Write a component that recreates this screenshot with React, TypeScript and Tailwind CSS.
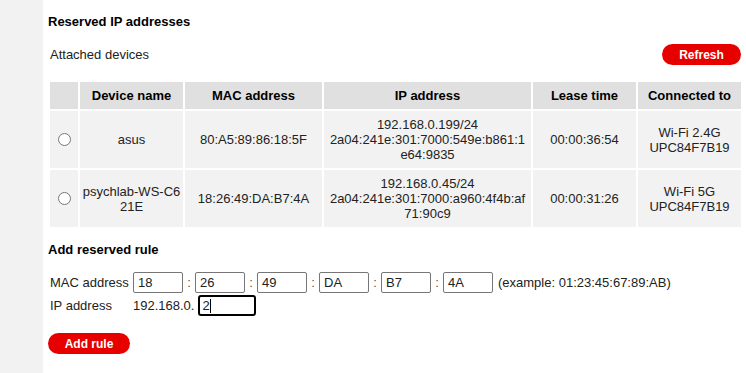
const font = { fontFamily: '"Liberation Sans", Arial, sans-serif' };

const devices = [
  {
    name: ['asus'],
    mac: '80:A5:89:86:18:5F',
    ip: ['192.168.0.199/24', '2a04:241e:301:7000:549e:b861:1', 'e64:9835'],
    lease: '00:00:36:54',
    conn: ['Wi-Fi 2.4G', 'UPC84F7B19'],
  },
  {
    name: ['psychlab-WS-C6', '21E'],
    mac: '18:26:49:DA:B7:4A',
    ip: ['192.168.0.45/24', '2a04:241e:301:7000:a960:4f4b:af', '71:90c9'],
    lease: '00:00:31:26',
    conn: ['Wi-Fi 5G', 'UPC84F7B19'],
  },
];

const macParts = ['18', '26', '49', 'DA', 'B7', '4A'];

function Lines({ lines }: { lines: string[] }) {
  return (
    <>
      {lines.map((l, i) => (
        <div key={i} className="whitespace-nowrap">{l}</div>
      ))}
    </>
  );
}

export default function App() {
  return (
    <div className="flex w-[746px] min-h-[373px] text-[13px] text-[#222]" style={font}>
      {/* sidebar */}
      <div className="w-[43px] shrink-0 bg-[#f2f2f2]" />

      <div className="flex-1 bg-white pl-[5px]">
        <h2 className="mt-[14px] font-bold leading-[15px] text-black">Reserved IP addresses</h2>

        <div className="mt-[15px] flex h-[21px] w-[695px] items-center justify-between px-[2px]">
          <span>Attached devices</span>
          <button className="h-[21px] w-[79px] rounded-full bg-[#e60000] text-[12px] font-bold text-white">
            Refresh
          </button>
        </div>

        {/* devices table */}
        <table className="mt-[15px] w-[695px] table-fixed border-separate border-spacing-[2px] leading-[15px]">
          <colgroup>
            <col className="w-[28px]" />
            <col className="w-[103px]" />
            <col className="w-[137px]" />
            <col className="w-[207px]" />
            <col className="w-[103px]" />
            <col className="w-[103px]" />
          </colgroup>
          <thead>
            <tr className="h-[27px] bg-[#e0e0e0] font-bold text-black">
              <th />
              <th className="text-center">Device name</th>
              <th className="text-center">MAC address</th>
              <th className="text-center">IP address</th>
              <th className="text-center">Lease time</th>
              <th className="text-center">Connected to</th>
            </tr>
          </thead>
          <tbody>
            {devices.map((d, i) => (
              <tr key={i} className="h-[57px] bg-[#f2f2f2] text-center">
                <td>
                  <div className="mx-auto h-[13px] w-[13px] rounded-full border border-[#767676] bg-white" />
                </td>
                <td><Lines lines={d.name} /></td>
                <td className="whitespace-nowrap">{d.mac}</td>
                <td><Lines lines={d.ip} /></td>
                <td>{d.lease}</td>
                <td><Lines lines={d.conn} /></td>
              </tr>
            ))}
          </tbody>
        </table>

        <h3 className="mt-[13px] font-bold leading-[15px] text-black">Add reserved rule</h3>

        {/* MAC row */}
        <div className="mt-[15px] flex h-[21px] items-center">
          <span className="w-[85px] pl-[2px]">MAC address</span>
          {macParts.map((p, i) => (
            <div key={i} className="flex items-center">
              {i > 0 && <span className="w-[12px] text-center text-[#555]">:</span>}
              <div className="flex h-[21px] w-[50px] items-center rounded-[2px] border border-[#767676] pl-[4px]">
                {p}
              </div>
            </div>
          ))}
          <span className="ml-[5px]">(example: 01:23:45:67:89:AB)</span>
        </div>

        {/* IP row */}
        <div className="mt-[2px] flex h-[21px] items-center">
          <span className="w-[85px] pl-[2px]">IP address</span>
          <span>192.168.0.</span>
          <div className="ml-[4px] flex h-[21px] w-[58px] items-center rounded-[3px] border-2 border-black pl-[2px]">
            2<span className="h-[14px] w-px bg-black" />
          </div>
        </div>

        <button className="mt-[17px] h-[21px] w-[82px] rounded-full bg-[#e60000] text-[12px] font-bold text-white">
          Add rule
        </button>
      </div>
    </div>
  );
}
